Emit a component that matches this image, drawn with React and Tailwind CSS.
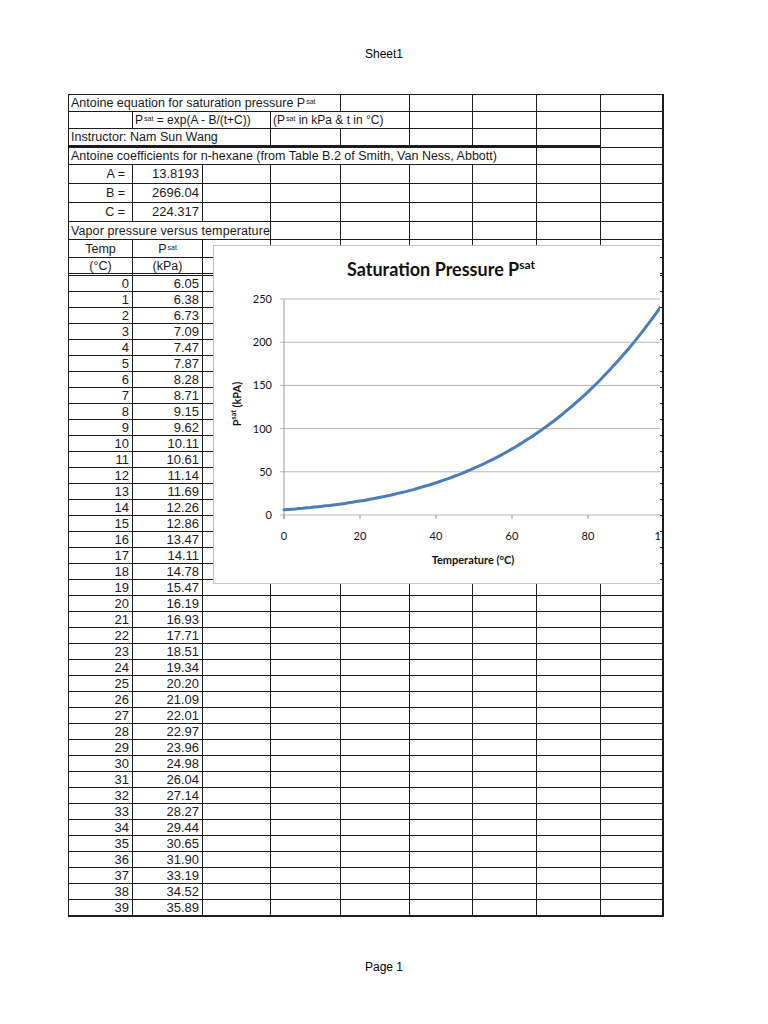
import clsx from "clsx";

const A = 13.8193;
const B = 2696.04;
const C = 224.317;

const psat = (t) => Math.exp(A - B / (t + C));

const rows = Array.from({ length: 40 }, (_, t) => ({ t, p: psat(t).toFixed(2) }));

function Cell({ className, children }) {
  return (
    <div
      className={clsx(
        "border-r border-b border-[#1c1c1c] flex items-center overflow-visible whitespace-nowrap",
        className
      )}
    >
      {children}
    </div>
  );
}

function Empties({ n, className }) {
  return Array.from({ length: n }, (_, i) => <Cell key={i} className={className} />);
}

function Sup({ children }) {
  return <sup className="text-[7px] relative -top-[1px] ml-[1px]">{children}</sup>;
}

function Chart() {
  // chart coords: origin at chart's top-left corner
  const x0 = 71;
  const y0 = 270;
  const xs = 3.8;
  const ys = 0.864;

  let d = "";
  for (let t = 0; t <= 100; t += 1) {
    const x = x0 + t * xs;
    const y = y0 - psat(t) * ys;
    d += (t === 0 ? "M" : " L") + x.toFixed(1) + " " + y.toFixed(1);
  }

  const yTicks = [0, 50, 100, 150, 200, 250];
  const xTicks = [0, 20, 40, 60, 80, 100];

  return (
    <div className="absolute left-[145px] top-[151px] w-[447px] h-[339px] bg-white border-l border-t border-b border-[#c4c4c4] overflow-hidden">
      <svg width="447" height="339" className="absolute -left-[1px] -top-[1px]" style={{ fontFamily: "Lato, 'Open Sans', sans-serif" }}>
        <text x="228" y="31" textAnchor="middle" fontSize="18" fontWeight="700" fill="#111">
          Saturation Pressure P
          <tspan fontSize="12" dy="-7">sat</tspan>
        </text>

        {yTicks.map((v) => {
          const y = y0 - v * ys;
          return (
            <g key={v}>
              <line x1={x0 - 4} x2="450" y1={y} y2={y} stroke="#b5b5b5" strokeWidth="1" />
              <text x="59" y={y + 4} textAnchor="end" fontSize="11" fill="#111">
                {v}
              </text>
            </g>
          );
        })}

        <line x1={x0} x2={x0} y1={y0 - 250 * ys} y2={y0 + 4} stroke="#9a9a9a" strokeWidth="1" />

        {xTicks.map((v) => {
          const x = x0 + v * xs;
          return (
            <g key={v}>
              <line x1={x} x2={x} y1={y0} y2={y0 + 4} stroke="#9a9a9a" strokeWidth="1" />
              <text x={x} y="295" textAnchor="middle" fontSize="11" fill="#111">
                {v}
              </text>
            </g>
          );
        })}

        <path d={d} fill="none" stroke="#4a7ebb" strokeWidth="3" strokeLinecap="round" />

        <text x="260" y="319" textAnchor="middle" fontSize="11" fontWeight="700" fill="#111">
          Temperature (°C)
        </text>

        <text
          x="25"
          y="159"
          transform="rotate(-90 25 159)"
          textAnchor="middle"
          fontSize="11"
          fontWeight="700"
          fill="#111"
          dominantBaseline="middle"
        >
          P<tspan fontSize="7" dy="-4">sat</tspan>
          <tspan dy="4"> (kPA)</tspan>
        </text>
      </svg>
    </div>
  );
}

export default function App() {
  return (
    <div
      className="w-[768px] h-[1024px] bg-white text-[#1a1a1a] flex flex-col items-center pt-[47px]"
      style={{ fontFamily: "'Liberation Sans', Arial, sans-serif" }}
    >
      <div className="text-[12px] leading-[14px] text-black">Sheet1</div>

      <div className="self-start ml-[68px] mt-[33px] relative">
        <div className="grid grid-cols-[64px_70px_68px_70px_69px_63px_64px_64px_62px] w-[596px] border border-[#1c1c1c] text-[12.5px] leading-[14px]">
          {/* row 1 */}
          <Cell className="col-span-4 h-[17px] pl-[2px]">
            Antoine equation for saturation pressure P<Sup>sat</Sup>
          </Cell>
          <Empties n={5} className="h-[17px]" />

          {/* row 2 */}
          <Cell className="h-[17px]" />
          <Cell className="col-span-2 h-[17px] pl-[2px] text-[12px]">
            P<Sup>sat</Sup>&nbsp;= exp(A - B/(t+C))
          </Cell>
          <Cell className="col-span-2 h-[17px] pl-[2px] text-[12px]">
            (P<Sup>sat</Sup>&nbsp;in kPa &amp; t in °C)
          </Cell>
          <Empties n={4} className="h-[17px]" />

          {/* row 3 */}
          <Cell className="col-span-3 h-[19px] pl-[2px] border-b-[3px]">Instructor: Nam Sun Wang</Cell>
          <Empties n={5} className="h-[19px] border-b-[3px]" />
          <Cell className="h-[19px]" />

          {/* row 4 */}
          <Cell className="col-span-7 h-[17px] pl-[2px]">
            Antoine coefficients for n-hexane (from Table B.2 of Smith, Van Ness, Abbott)
          </Cell>
          <Empties n={2} className="h-[17px]" />

          {/* coefficients */}
          {[
            ["A =", "13.8193"],
            ["B =", "2696.04"],
            ["C =", "224.317"],
          ].map(([k, v]) => (
            <div key={k} className="contents">
              <Cell className="h-[19px] justify-end pr-[7px]">{k}</Cell>
              <Cell className="h-[19px] justify-end pr-[3px] text-[13px]">{v}</Cell>
              <Empties n={7} className="h-[19px]" />
            </div>
          ))}

          {/* vapor row */}
          <Cell className="col-span-3 h-[18px] pl-[2px] tracking-[0.1px]">Vapor pressure versus temperature</Cell>
          <Empties n={6} className="h-[18px]" />

          {/* header rows */}
          <Cell className="h-[18px] justify-center">Temp</Cell>
          <Cell className="h-[18px] justify-center">
            P<Sup>sat</Sup>
          </Cell>
          <Empties n={7} className="h-[18px]" />

          <Cell className="h-[18px] justify-center border-b-[3px] border-double">(°C)</Cell>
          <Cell className="h-[18px] justify-center border-b-[3px] border-double">(kPa)</Cell>
          <Empties n={7} className="h-[18px] border-b-[3px] border-double" />

          {/* data */}
          {rows.map((r) => (
            <div key={r.t} className="contents">
              <Cell className="h-[16px] justify-end pr-[3px] text-[13px]">{r.t}</Cell>
              <Cell className="h-[16px] justify-end pr-[3px] text-[13px]">{r.p}</Cell>
              <Empties n={7} className="h-[16px]" />
            </div>
          ))}
        </div>

        <Chart />
      </div>

      <div className="mt-[43px] text-[12px] leading-[14px] text-black">Page 1</div>
    </div>
  );
}
